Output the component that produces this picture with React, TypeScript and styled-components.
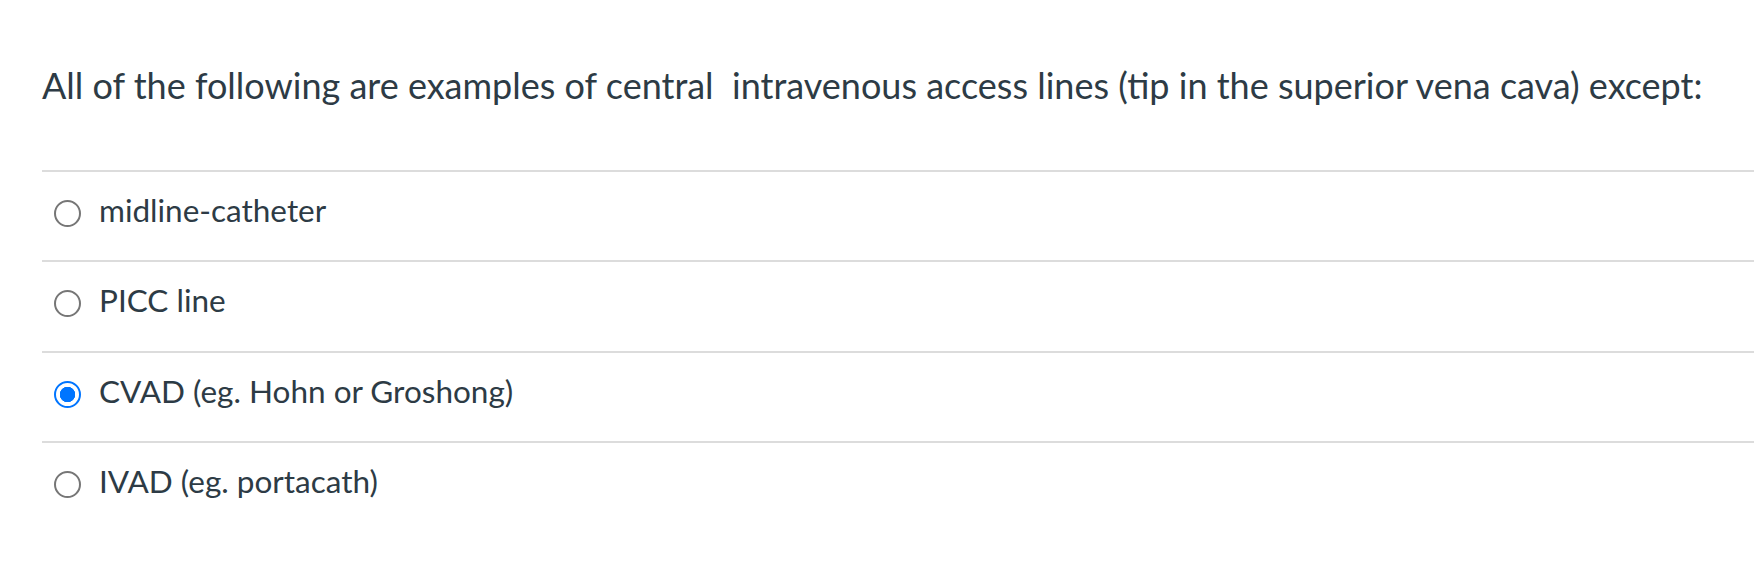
import React from "react";
import styled, { createGlobalStyle } from "styled-components";

const Global = createGlobalStyle`
  html, body { margin: 0; padding: 0; background: #ffffff; }
  body { font-family: Lato, "Open Sans", sans-serif; color: #2d3b45; }
`;

const Page = styled.div`
  padding: 59px 0 0 42px;
`;

const Question = styled.p`
  margin: 0 0 58px 0;
  font-size: 36px;
  line-height: 52.5px;
  white-space: pre;
`;

const List = styled.div`
  display: flex;
  flex-direction: column;
`;

const Row = styled.label`
  display: flex;
  align-items: flex-start;
  height: 88.5px;
  border-top: 2px solid #dcdcdc;
  box-sizing: content-box;
`;

const Radio = styled.input.attrs({ type: "radio" })`
  appearance: none;
  -webkit-appearance: none;
  margin: 28px 18px 0 12px;
  width: 27px;
  height: 27px;
  flex: none;
  border-radius: 50%;
  border: 2.5px solid #767676;
  box-sizing: border-box;
  background: #fff;
  &:checked {
    border-color: #0075ff;
    background: radial-gradient(circle, #0075ff 0 7.5px, #fff 8px);
  }
`;

const Text = styled.span`
  font-size: 31.5px;
  line-height: 42px;
  padding-top: 17px;
`;

const options = [
  { text: "midline-catheter", checked: false },
  { text: "PICC line", checked: false },
  { text: "CVAD (eg. Hohn or Groshong)", checked: true },
  { text: "IVAD (eg. portacath)", checked: false },
];

export default function App() {
  return (
    <>
      <Global />
      <Page>
        <Question>
          {"All of the following are examples of central  intravenous access lines (tip in the superior vena cava) except:"}
        </Question>
        <List>
          {options.map((o) => (
            <Row key={o.text}>
              <Radio name="q" defaultChecked={o.checked} />
              <Text>{o.text}</Text>
            </Row>
          ))}
        </List>
      </Page>
    </>
  );
}
